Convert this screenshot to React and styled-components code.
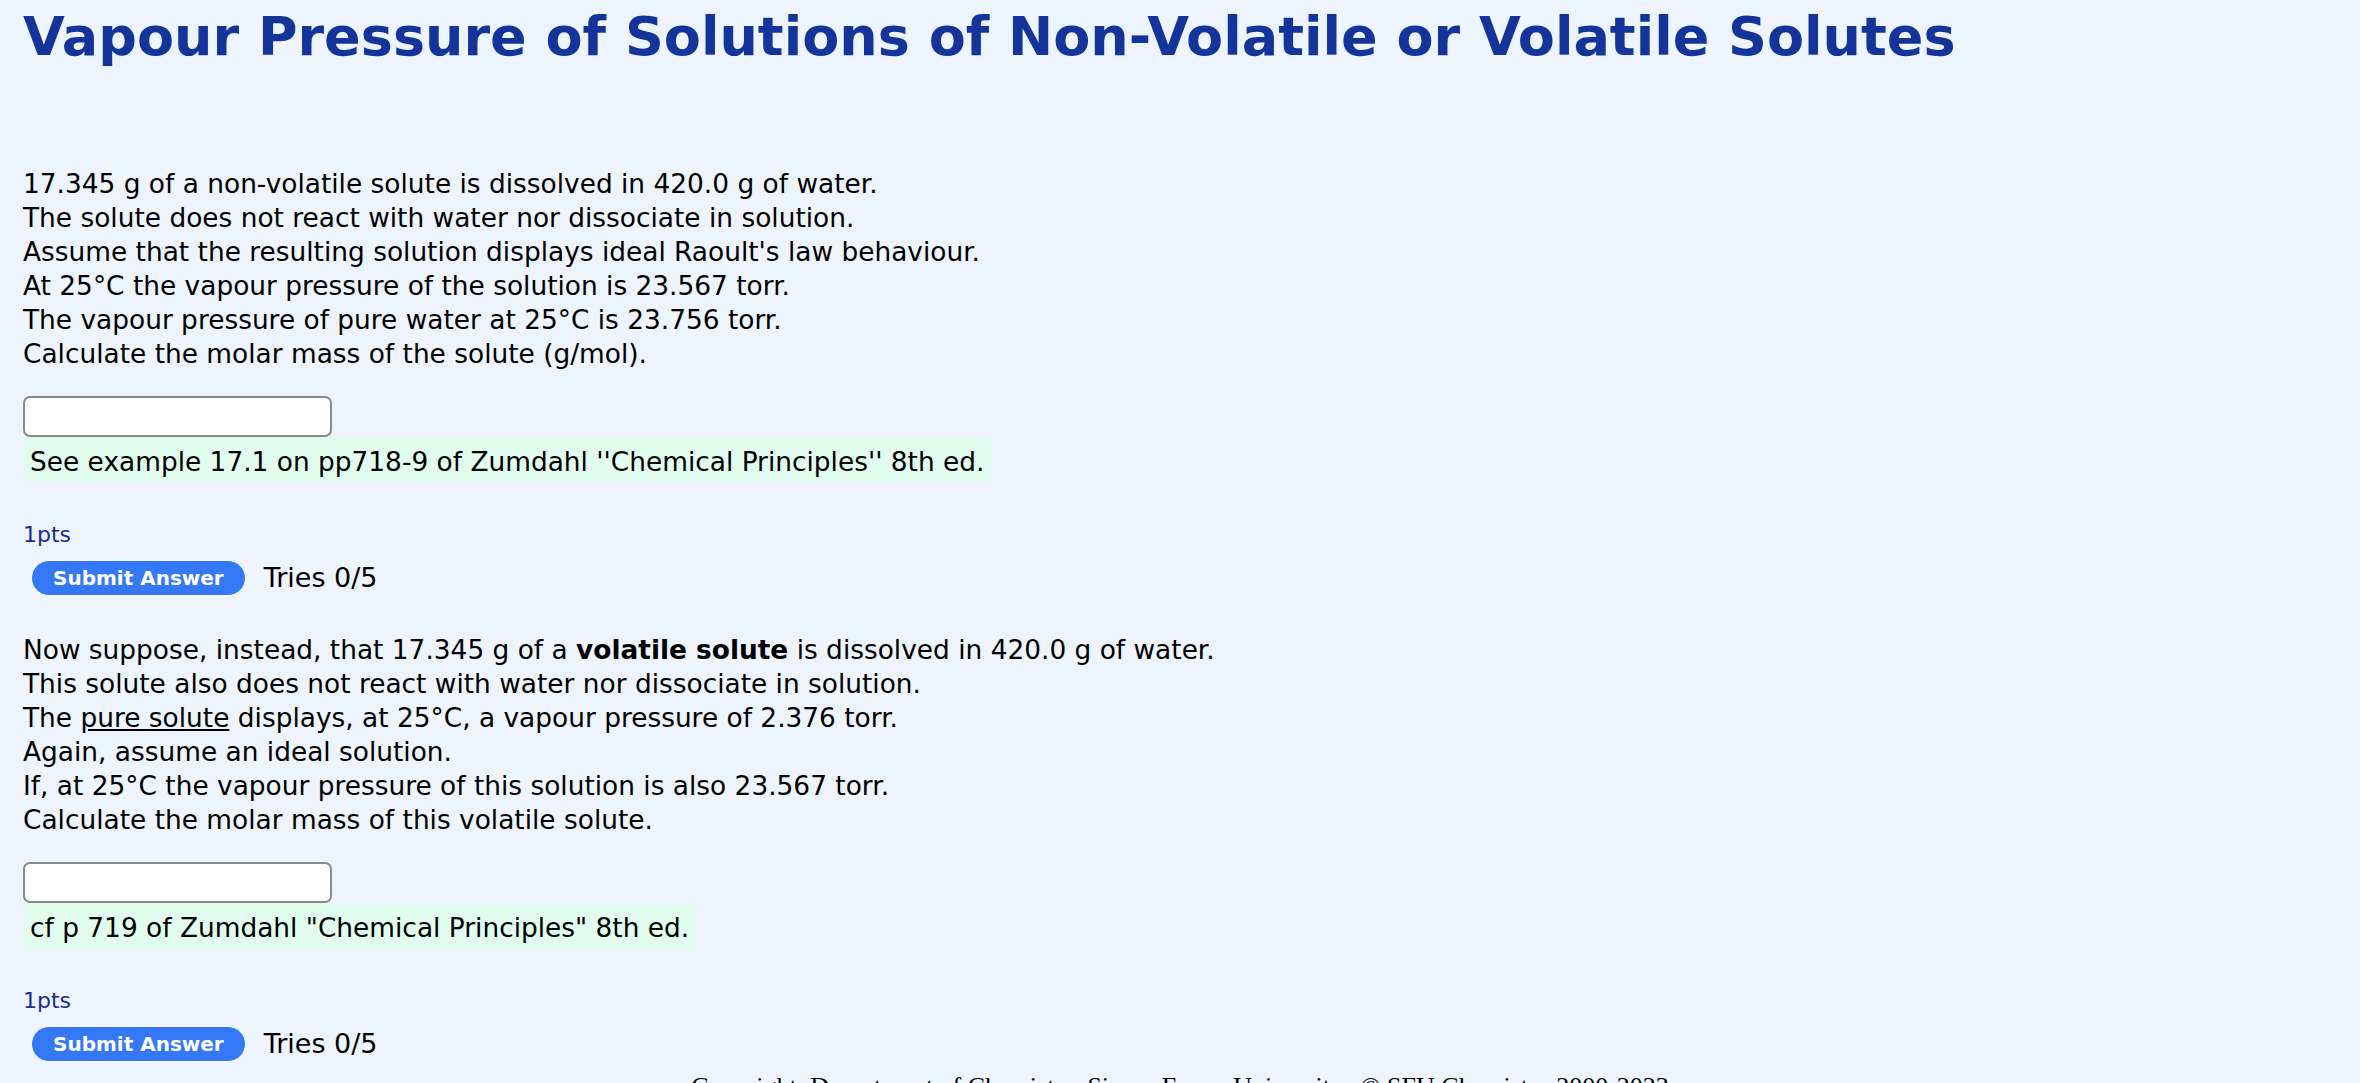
import React from "react";
import styled, { createGlobalStyle } from "styled-components";

const Global = createGlobalStyle`
  html, body { margin: 0; padding: 0; background: #edf4fe; }
  body { font-family: "DejaVu Sans", Verdana, sans-serif; color: #000; }
`;

const Page = styled.div`
  padding: 0 23px;
  display: flex;
  flex-direction: column;
`;

const Title = styled.h1`
  margin: 4px 0 0 0;
  font-size: 54px;
  line-height: 65px;
  font-weight: bold;
  color: #14349a;
  white-space: nowrap;
`;

const Question = styled.section`
  display: flex;
  flex-direction: column;
  align-items: flex-start;
  margin-top: ${(p) => p.$top}px;
`;

const Text = styled.p`
  margin: 0;
  font-size: 26.4px;
  line-height: 34px;
`;

const Under = styled.span`
  text-decoration: underline;
`;

const AnswerInput = styled.input`
  margin-top: 25px;
  width: 309px;
  height: 41px;
  box-sizing: border-box;
  background: #fff;
  border: 2px solid #8a8a8a;
  border-radius: 7px;
  padding: 0 8px;
  font-size: 24px;
  outline: none;
`;

const Hint = styled.div`
  background: #e1fcee;
  padding: 8px 7px 4px 7px;
  font-size: 26.4px;
  line-height: 34px;
`;

const Points = styled.div`
  margin-top: 40px;
  font-size: 22px;
  line-height: 24px;
  color: #1a2b8c;
`;

const SubmitRow = styled.div`
  display: flex;
  align-items: center;
  gap: 18px;
  margin-top: 13px;
  padding-left: 8px;
`;

const SubmitButton = styled.button`
  height: 36px;
  padding: 0 21px;
  border-radius: 18px;
  border: 1.5px solid #ffffff;
  background: #3578f5;
  color: #fff;
  font-family: "DejaVu Sans", Verdana, sans-serif;
  font-weight: bold;
  font-size: 20px;
  line-height: 1;
  cursor: pointer;
  white-space: nowrap;
`;

const Tries = styled.span`
  font-size: 27px;
  line-height: 34px;
`;

const Footer = styled.footer`
  margin-top: 11px;
  text-align: center;
  font-family: "Liberation Serif", "Times New Roman", serif;
  font-size: 26px;
  line-height: 28px;
  white-space: nowrap;
`;

function Block({ top, lines, hint }) {
  return (
    <Question $top={top}>
      <Text>{lines}</Text>
      <AnswerInput type="text" />
      <Hint>{hint}</Hint>
      <Points>1pts</Points>
      <SubmitRow>
        <SubmitButton>Submit Answer</SubmitButton>
        <Tries>Tries 0/5</Tries>
      </SubmitRow>
    </Question>
  );
}

export default function App() {
  return (
    <>
      <Global />
      <Page>
        <Title>Vapour Pressure of Solutions of Non-Volatile or Volatile Solutes</Title>
        <Block
          top={98}
          lines={
            <>
              17.345 g of a non-volatile solute is dissolved in 420.0 g of water.<br />
              The solute does not react with water nor dissociate in solution.<br />
              Assume that the resulting solution displays ideal Raoult's law behaviour.<br />
              At 25°C the vapour pressure of the solution is 23.567 torr.<br />
              The vapour pressure of pure water at 25°C is 23.756 torr.<br />
              Calculate the molar mass of the solute (g/mol).
            </>
          }
          hint={<>See example 17.1 on pp718-9 of Zumdahl ''Chemical Principles'' 8th ed.</>}
        />
        <Block
          top={37}
          lines={
            <>
              Now suppose, instead, that 17.345 g of a <b>volatile solute</b> is dissolved in 420.0 g of water.<br />
              This solute also does not react with water nor dissociate in solution.<br />
              The <Under>pure solute</Under> displays, at 25°C, a vapour pressure of 2.376 torr.<br />
              Again, assume an ideal solution.<br />
              If, at 25°C the vapour pressure of this solution is also 23.567 torr.<br />
              Calculate the molar mass of this volatile solute.
            </>
          }
          hint={<>cf p 719 of Zumdahl "Chemical Principles" 8th ed.</>}
        />
        <Footer>Copyright: Department of Chemistry, Simon Fraser University.&nbsp;&nbsp;© SFU Chemistry 2000-2023</Footer>
      </Page>
    </>
  );
}
